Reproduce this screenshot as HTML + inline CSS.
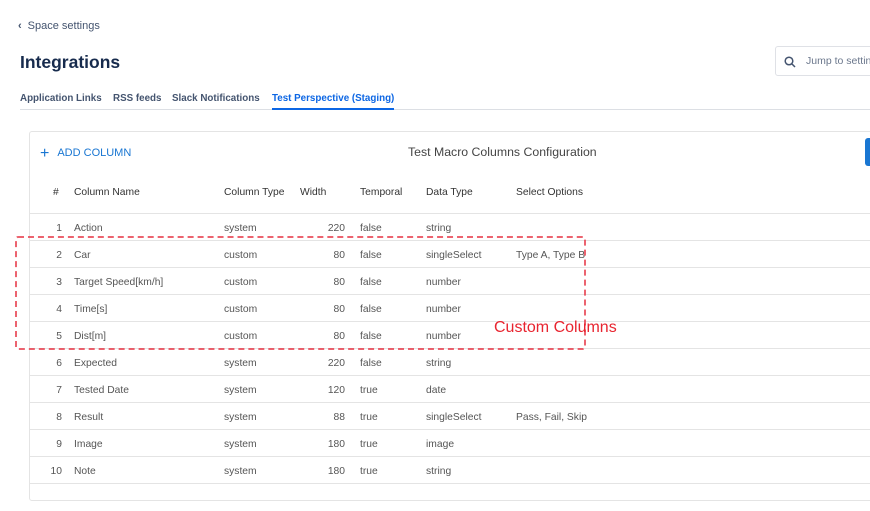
<!DOCTYPE html>
<html><head><style>
body{margin:0;width:870px;height:495px;overflow:hidden;background:#fff;font-family:"Liberation Sans",Arial,sans-serif;position:relative;color:#172b4d}
.a{position:absolute;white-space:nowrap}
.row{position:absolute;left:29px;width:841px;height:27px;border-top:1px solid #e4e4e4;font-size:10.3px;color:#555}
.row span{position:absolute;top:9px}
</style></head><body>
<div class="a" style="left:18px;top:20px;font-size:11px;color:#44546f"><span style="font-weight:bold;margin-right:6px">&#8249;</span>Space settings</div>
<div class="a" style="left:20px;top:52px;font-size:17.5px;font-weight:bold;color:#172b4d">Integrations</div>
<div class="a" style="left:775px;top:46px;width:100px;height:30px;border:1px solid #dfe1e6;border-radius:3px;box-sizing:border-box">
<svg style="position:absolute;left:8px;top:9px" width="12" height="12" viewBox="0 0 12 12"><circle cx="5" cy="5" r="3.8" fill="none" stroke="#44546f" stroke-width="1.5"/><path d="M8 8l3 3" stroke="#44546f" stroke-width="1.5"/></svg>
<span style="position:absolute;left:30px;top:8px;font-size:10.5px;color:#6b778c">Jump to settings</span></div>
<div class="a" style="left:20px;top:93px;font-size:9.8px;font-weight:bold;color:#44546f">Application Links</div>
<div class="a" style="left:113px;top:93px;font-size:9.8px;font-weight:bold;color:#44546f">RSS feeds</div>
<div class="a" style="left:172px;top:93px;font-size:9.8px;font-weight:bold;color:#44546f">Slack Notifications</div>
<div class="a" style="left:272px;top:93px;font-size:9.8px;font-weight:bold;color:#0c66e4">Test Perspective (Staging)</div>
<div class="a" style="left:20px;top:109px;width:850px;height:1px;background:#dcdfe4"></div>
<div class="a" style="left:272px;top:108px;width:122px;height:2px;background:#0c66e4"></div>
<div class="a" style="left:29px;top:131px;width:850px;height:370px;border:1px solid #e4e4e4;border-radius:3px;box-sizing:border-box"></div>
<div class="a" style="left:40px;top:145px;font-size:11px;color:#1976d2"><span style="font-size:16px;margin-right:8px;vertical-align:-2px">+</span>ADD COLUMN</div>
<div class="a" style="left:408px;top:145px;font-size:12.3px;color:#444">Test Macro Columns Configuration</div>
<div class="a" style="left:865px;top:138px;width:12px;height:28px;background:#1976d2;border-radius:3px"></div>
<div class="a" style="top:187px;left:0;font-size:10.3px;color:#333;width:870px;height:14px">
<span class="a" style="left:53px">#</span><span class="a" style="left:74px">Column Name</span><span class="a" style="left:224px">Column Type</span><span class="a" style="left:300px">Width</span><span class="a" style="left:360px">Temporal</span><span class="a" style="left:426px">Data Type</span><span class="a" style="left:516px">Select Options</span></div>
<div id="rows"></div>
<script>
var d=[["1","Action","system","220","false","string",""],["2","Car","custom","80","false","singleSelect","Type A, Type B"],["3","Target Speed[km/h]","custom","80","false","number",""],["4","Time[s]","custom","80","false","number",""],["5","Dist[m]","custom","80","false","number",""],["6","Expected","system","220","false","string",""],["7","Tested Date","system","120","true","date",""],["8","Result","system","88","true","singleSelect","Pass, Fail, Skip"],["9","Image","system","180","true","image",""],["10","Note","system","180","true","string",""]];
var h="";d.forEach(function(r,i){var t=213+27*i;h+='<div class="row" style="top:'+t+'px"><span style="left:0;width:33px;text-align:right">'+r[0]+'</span><span style="left:45px">'+r[1]+'</span><span style="left:195px">'+r[2]+'</span><span style="left:280px;width:36px;text-align:right">'+r[3]+'</span><span style="left:331px">'+r[4]+'</span><span style="left:397px">'+r[5]+'</span><span style="left:487px">'+r[6]+'</span></div>';});
h+='<div class="row" style="top:483px"></div>';
document.getElementById("rows").innerHTML=h;
</script>
<div class="a" style="left:15px;top:236px;width:571px;height:114px;border:2px dashed rgba(232,60,75,0.8);border-radius:3px;box-sizing:border-box"></div>
<div class="a" style="left:494px;top:319px;font-size:16px;color:#e8242f;font-family:'Liberation Sans','DejaVu Sans',sans-serif">Custom Columns</div>
</body></html>
